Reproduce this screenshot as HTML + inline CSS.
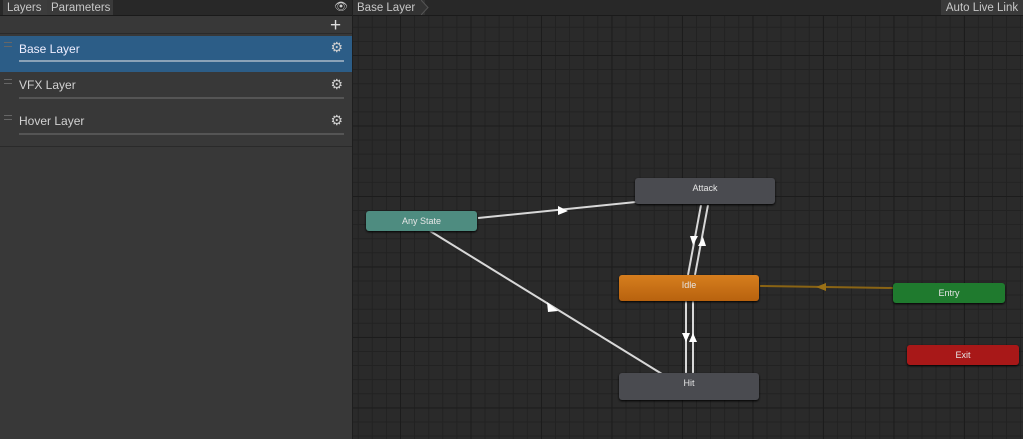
<!DOCTYPE html>
<html><head><style>
body{margin:0;width:1023px;height:439px;overflow:hidden;background:#282828;font-family:"Liberation Sans",sans-serif;position:relative}
#left{position:absolute;left:0;top:0;width:352px;height:439px;background:#383838;border-right:1px solid #1e1e1e}
.tabbar{position:absolute;left:0;top:0;width:352px;height:15px;background:#282828;border-bottom:1px solid #1a1a1a}
.tab{position:absolute;top:0;height:15px;font-size:11.5px;color:#c8c8c8;line-height:16px;padding:0 4px}
.layer{position:absolute;left:0;width:352px;height:36px}
.layer .n{position:absolute;left:19px;top:5px;font-size:12px;color:#d2d2d2}
.layer .bar{position:absolute;left:19px;right:8px;top:24px;height:2px;background:#555}
.layer .g{position:absolute;right:9px;top:3px;font-size:14px;color:#d0d0d0}
.layer .h{position:absolute;left:4px;top:6px;width:8px;height:3px;border-top:1px solid #666;border-bottom:1px solid #666}
#graph{position:absolute;left:353px;top:16px;width:670px;height:423px;background-color:#2a2a2a;
background-image:linear-gradient(#1c1c1c 1px,transparent 1px),linear-gradient(90deg,#1c1c1c 1px,transparent 1px),linear-gradient(#222 1px,transparent 1px),linear-gradient(90deg,#222 1px,transparent 1px);
background-size:70.5px 70.5px,70.5px 70.5px,14.1px 14.1px,14.1px 14.1px;background-position:47px 39px}
.top{position:absolute;left:353px;top:0;width:670px;height:15px;background:#282828;border-bottom:1px solid #1a1a1a}
.node{position:absolute;height:26px;border-radius:3px;font-size:9px;color:#e6e6e6;text-align:center;line-height:20px;box-shadow:0 1px 2px #000}
</style></head><body>
<div id="left">
<div class="tabbar">
<div class="tab" style="left:3px;background:#3c3c3c;width:38px">Layers</div>
<div class="tab" style="left:47px;background:#3a3a3a;width:58px">Parameters</div>
<div style="position:absolute;left:334px;top:0;font-size:11px;color:#ccc">👁</div>
</div>
<div style="position:absolute;left:330px;top:16px;font-size:19px;color:#ddd;line-height:20px">+</div>
<div style="position:absolute;left:0;top:33px;width:352px;height:1px;background:#2a2a2a"></div>
<div class="layer" style="top:36px;background:#2c5d87"><div class="h"></div><div class="n" style="color:#eef;top:6px">Base Layer</div><div class="bar" style="background:#8aa2b8"></div><div class="g">⚙</div></div>
<div class="layer" style="top:73px"><div class="h"></div><div class="n">VFX Layer</div><div class="bar"></div><div class="g">⚙</div></div>
<div class="layer" style="top:109px"><div class="h"></div><div class="n">Hover Layer</div><div class="bar"></div><div class="g">⚙</div></div>
<div style="position:absolute;left:0;top:146px;width:352px;height:1px;background:#2a2a2a"></div>
</div>
<div class="top">
<div style="position:absolute;left:0;top:0;height:15px;width:68px;background:#333;font-size:11.5px;color:#c8c8c8;line-height:16px;padding-left:4px">Base Layer</div>
<svg style="position:absolute;left:68px;top:0" width="8" height="15"><path d="M0 0L7 7.5L0 15" fill="#333" stroke="#555"/></svg>
<div style="position:absolute;right:0;top:0;height:15px;width:82px;background:#3a3a3a;font-size:11.5px;color:#c8c8c8;line-height:16px;text-align:center">Auto Live Link</div>
</div>
<div id="graph"></div>
<svg style="position:absolute;left:0;top:0" width="1023" height="439">
<g stroke="#d8d8d8" stroke-width="2" fill="none">
<line x1="478" y1="218" x2="636" y2="202"/>
<line x1="430" y1="231" x2="662" y2="374"/>
<line x1="701" y1="205" x2="688" y2="275"/>
<line x1="708" y1="205" x2="695" y2="275"/>
<line x1="686" y1="301" x2="686" y2="373"/>
<line x1="693" y1="301" x2="693" y2="373"/>
</g>
<line x1="760" y1="286" x2="894" y2="288" stroke="#8a6414" stroke-width="2"/>
<g fill="#fff">
<path d="M558 206L568 211L558 215Z"/>
<path d="M547 302L558 311L548 312Z" />
<path d="M690 236L698 236L693 245Z"/>
<path d="M698 246L706 246L703 237Z"/>
<path d="M682 333L690 333L686 342Z"/>
<path d="M689 342L697 342L693 333Z"/>
</g>
<path d="M816 287L826 283L826 291Z" fill="#9a7016"/>
</svg>
<div class="node" style="left:635px;top:178px;width:140px;background:#4a4b50">Attack</div>
<div class="node" style="left:366px;top:211px;width:111px;height:20px;line-height:20px;background:#4e8c80">Any State</div>
<div class="node" style="left:619px;top:275px;width:140px;background:linear-gradient(#d67e1e,#b8620e)">Idle</div>
<div class="node" style="left:893px;top:283px;width:112px;height:20px;line-height:20px;background:#1f7a2e">Entry</div>
<div class="node" style="left:907px;top:345px;width:112px;height:20px;line-height:20px;background:#a81818">Exit</div>
<div class="node" style="left:619px;top:373px;width:140px;height:27px;line-height:21px;background:#4a4b50">Hit</div>
</body></html>
